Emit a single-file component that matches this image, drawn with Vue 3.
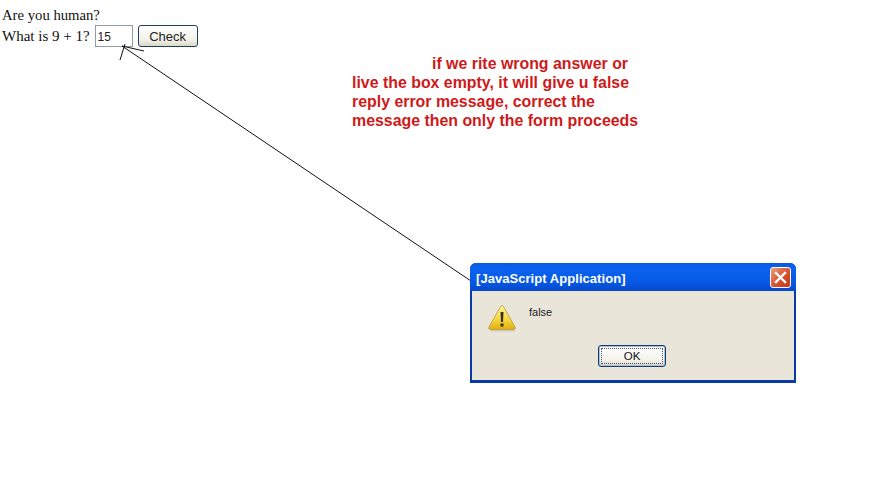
<script setup>
const note = [
  "if we rite wrong answer or",
  "live the box empty, it will give u false",
  "reply error message, correct the",
  "message then only the form proceeds",
];
</script>

<template>
  <div class="page">
    <form class="human" @submit.prevent>
      <div class="question">Are you human?</div>
      <div class="answer-row">
        <label for="answer">What is 9 + 1?</label>
        <input id="answer" class="answer" value="15" />
        <button class="check" type="button">Check</button>
      </div>
    </form>

    <div class="note">
      <div v-for="(line, i) in note" :key="i" :class="{ first: i === 0 }">{{ line }}</div>
    </div>

    <!-- hand drawn arrow from the dialog up to the input -->
    <svg class="arrow" width="871" height="480" viewBox="0 0 871 480">
      <path d="M471 281 L122 46 M122 46 L144 51 M125 44 L120 60" fill="none" stroke="#111" stroke-width="1" />
    </svg>

    <div class="dialog">
      <div class="titlebar">
        <span class="title">[JavaScript Application]</span>
        <button class="close" type="button">
          <svg width="13" height="13" viewBox="0 0 13 13">
            <path d="M2 2 L11 11 M11 2 L2 11" stroke="#fff" stroke-width="2.4" stroke-linecap="square" />
          </svg>
        </button>
      </div>
      <div class="body">
        <div class="message">
          <svg class="warn" width="30" height="28" viewBox="0 0 30 28">
            <defs>
              <linearGradient id="warnFill" x1="0" y1="0" x2="0" y2="1">
                <stop offset="0" stop-color="#fff2a0" />
                <stop offset="0.6" stop-color="#f6d53c" />
                <stop offset="1" stop-color="#e0ae10" />
              </linearGradient>
            </defs>
            <path d="M15 1.5 Q16 1.5 17 3.5 L28 23 Q29 25.5 26.5 25.5 L3.5 25.5 Q1 25.5 2 23 L13 3.5 Q14 1.5 15 1.5 Z" fill="url(#warnFill)" stroke="#b79a3a" stroke-width="0.8" />
            <path d="M13.5 8 L16.5 8 L16 18 L14 18 Z" fill="#3a3320" />
            <rect x="13.5" y="19.5" width="3" height="3" fill="#3a3320" />
            <rect x="4" y="26" width="24" height="1.5" fill="#cfcbb8" />
          </svg>
          <span class="false">false</span>
        </div>
        <div class="actions">
          <button class="ok" type="button"><span>OK</span></button>
        </div>
      </div>
    </div>
  </div>
</template>

<style scoped>
.page {
  position: relative;
  width: 871px;
  height: 480px;
  overflow: hidden;
  background: #fff;
  color: #111;
}

.human {
  padding: 7px 0 0 2px;
  font-family: "Liberation Serif", serif;
  font-size: 15px;
}

.question {
  font-size: 14.7px;
  line-height: 16px;
}

.answer-row {
  display: flex;
  align-items: center;
  margin-top: 2px;
}

.answer {
  box-sizing: border-box;
  width: 38px;
  height: 22px;
  margin-left: 5px;
  padding: 2px 2px 0;
  border: 1px solid #8f9ca8;
  font-family: "Liberation Sans", sans-serif;
  font-size: 12px;
  color: #222;
  outline: none;
}

.check {
  box-sizing: border-box;
  width: 60px;
  height: 22px;
  margin-left: 5px;
  padding: 0;
  border: 1px solid #1f3f5f;
  border-radius: 3px;
  background: linear-gradient(#fff, #f2f1e8 70%, #dcd8c8);
  font-family: "Liberation Sans", sans-serif;
  font-size: 13px;
  color: #222;
}

.note {
  position: absolute;
  left: 352px;
  top: 54px;
  font-family: "Liberation Sans", sans-serif;
  font-weight: bold;
  font-size: 15.9px;
  line-height: 19px;
  color: #cf1a1a;
  white-space: nowrap;
}

.first {
  padding-left: 80px;
}

.arrow {
  position: absolute;
  left: 0;
  top: 0;
}

.dialog {
  position: absolute;
  left: 470px;
  top: 263px;
  box-sizing: border-box;
  width: 326px;
  height: 120px;
  display: flex;
  flex-direction: column;
  border-radius: 6px 6px 0 0;
  background: #0a3aa6;
}

.titlebar {
  height: 28px;
  display: flex;
  align-items: center;
  justify-content: space-between;
  padding: 0 5px 0 6px;
  border-radius: 6px 6px 0 0;
  background: linear-gradient(#0a5ae0, #0a62f0 20%, #0658e4 70%, #0648c8);
}

.title {
  margin-top: 2px;
  font-family: "Liberation Sans", sans-serif;
  font-weight: bold;
  font-size: 13px;
  letter-spacing: 0.05px;
  color: #fff;
}

.close {
  box-sizing: border-box;
  width: 21px;
  height: 21px;
  display: flex;
  align-items: center;
  justify-content: center;
  padding: 0;
  border: 1px solid #fff;
  border-radius: 3px;
  background: linear-gradient(135deg, #e8a080, #d8502c 55%, #c03a1a);
}

.body {
  flex: 1;
  margin: 0 2px 3px 2px;
  background: #e9e6d9;
}

.message {
  display: flex;
  align-items: flex-start;
  box-sizing: border-box;
  height: 43px;
  padding: 13px 0 0 15px;
}

.false {
  margin-left: 12px;
  margin-top: 2px;
  font-family: "Liberation Sans", sans-serif;
  font-size: 11px;
  color: #222;
}

.actions {
  display: flex;
  justify-content: center;
  padding-top: 11px;
  padding-right: 2px;
}

.ok {
  box-sizing: border-box;
  width: 68px;
  height: 22px;
  padding: 2px;
  border: 1px solid #1a3a6a;
  border-radius: 3px;
  background: linear-gradient(#fff, #f4f3ec 70%, #d8d4c4);
  box-shadow: inset 0 0 0 1px #a8c0e8;
  font-family: "Liberation Sans", sans-serif;
  font-size: 11.5px;
  color: #111;
}

.ok span {
  display: block;
  border: 1px dotted #555;
  line-height: 14px;
}
</style>
